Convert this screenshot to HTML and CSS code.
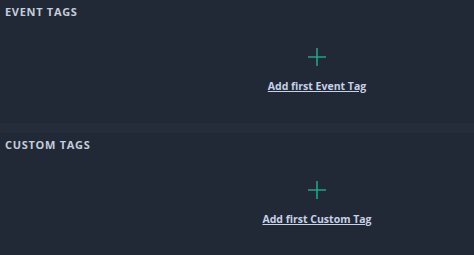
FILE: index.html
```html
<!DOCTYPE html>
<html>
<head>
<meta charset="utf-8">
<link rel="stylesheet" href="styles.css">
</head>
<body>
<section class="tag-section">
  <h2 class="section-title">EVENT TAGS</h2>
  <div class="section-body">
    <div class="spacer"></div>
    <div class="empty">
      <svg class="plus" width="20" height="20" viewBox="0 0 20 20"><path d="M10 1V19M1 10H19" stroke="#1fa38c" stroke-width="1.6" fill="none"/></svg>
      <a class="add-link" href="#">Add first Event Tag</a>
    </div>
  </div>
</section>
<div class="divider"></div>
<section class="tag-section">
  <h2 class="section-title">CUSTOM TAGS</h2>
  <div class="section-body">
    <div class="spacer"></div>
    <div class="empty">
      <svg class="plus" width="20" height="20" viewBox="0 0 20 20"><path d="M10 1V19M1 10H19" stroke="#1fa38c" stroke-width="1.6" fill="none"/></svg>
      <a class="add-link" href="#">Add first Custom Tag</a>
    </div>
  </div>
</section>
</body>
</html>
```
FILE: styles.css
```css
html, body {
  margin: 0;
  padding: 0;
  background: #222936;
  font-family: "Open Sans", "Noto Sans", sans-serif;
}
.tag-section {
  height: 123px;
  box-sizing: border-box;
  padding-top: 4px;
}
.section-title {
  margin: 0 0 0 5px;
  font-size: 11px;
  font-weight: 700;
  letter-spacing: 0.7px;
  color: #c3cddb;
  line-height: 15px;
}
.section-body {
  display: grid;
  grid-template-columns: 160px 1fr;
}
.empty {
  display: flex;
  flex-direction: column;
  align-items: center;
  padding-top: 28px;
}
.plus {
  display: block;
}
.add-link {
  margin-top: 12px;
  font-size: 10.5px;
  font-weight: 700;
  color: #c6d2e6;
  text-decoration: underline;
  line-height: 15px;
}
.divider {
  height: 10px;
  background: #252c3a;
}
```
